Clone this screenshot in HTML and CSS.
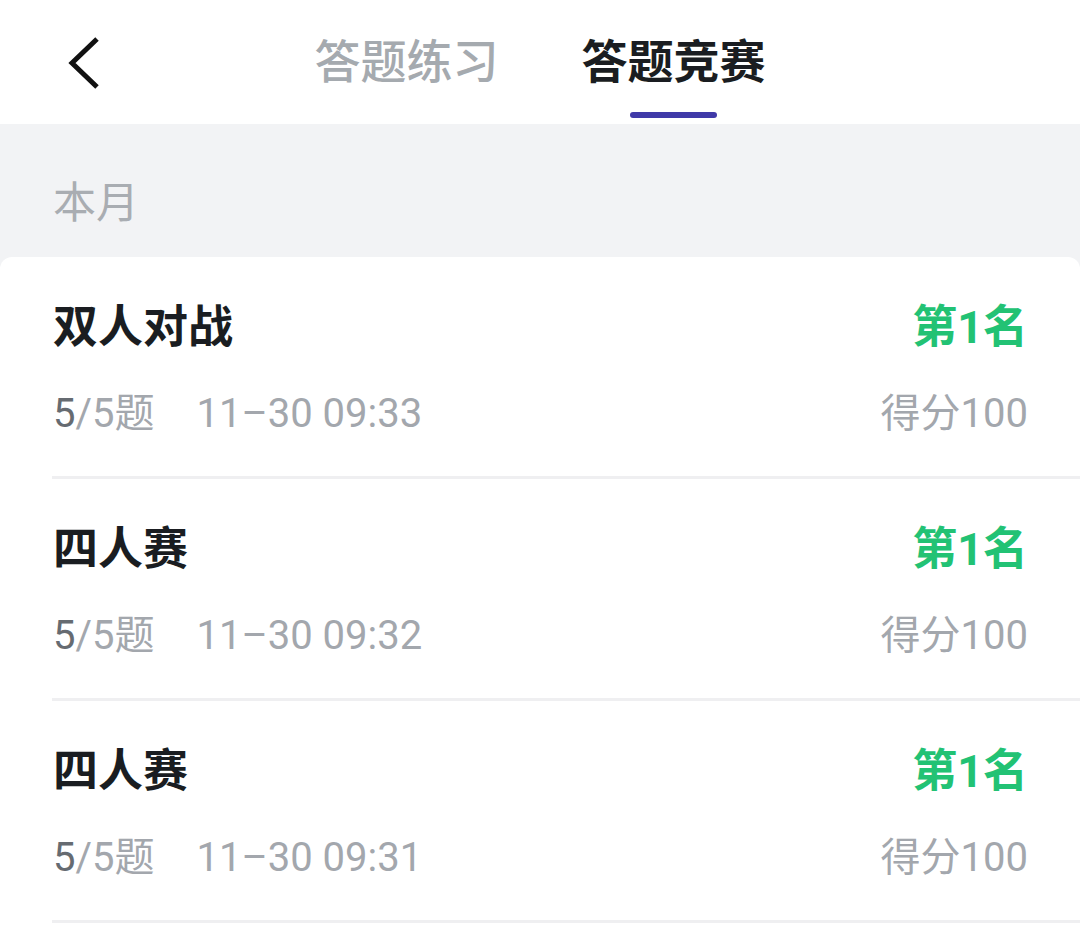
FILE: index.html
```html
<!DOCTYPE html>
<html lang="zh-CN">
<head>
<meta charset="utf-8">
<title>答题竞赛</title>
<link rel="stylesheet" href="styles.css">
</head>
<body>
<header class="header">
  <div class="back">
    <svg width="40" height="60" viewBox="0 0 40 60"><path d="M33 6 L8 30 L33 54" fill="none" stroke="#111" stroke-width="5" stroke-linecap="butt" stroke-linejoin="miter"/></svg>
  </div>
  <nav class="tabs">
    <div class="tab">答题练习</div>
    <div class="tab active">答题竞赛<span class="bar"></span></div>
  </nav>
  <div></div>
</header>
<div class="section">本月</div>
<main class="card">
  <div class="row">
    <div class="line1"><span class="title">双人对战</span><span class="rank">第1名</span></div>
    <div class="line2"><span class="meta"><span class="done">5</span>/5题<span class="time">11–30 09:33</span></span><span class="score">得分100</span></div>
  </div>
  <div class="row">
    <div class="line1"><span class="title">四人赛</span><span class="rank">第1名</span></div>
    <div class="line2"><span class="meta"><span class="done">5</span>/5题<span class="time">11–30 09:32</span></span><span class="score">得分100</span></div>
  </div>
  <div class="row">
    <div class="line1"><span class="title">四人赛</span><span class="rank">第1名</span></div>
    <div class="line2"><span class="meta"><span class="done">5</span>/5题<span class="time">11–30 09:31</span></span><span class="score">得分100</span></div>
  </div>
</main>
</body>
</html>
```

FILE: styles.css
```css
* { box-sizing: border-box; }
html, body { margin: 0; padding: 0; }
body {
  background: #f2f3f5;
  font-family: Roboto, "Noto Sans CJK SC", sans-serif;
  width: 1080px;
  height: 936px;
  overflow: hidden;
}
.header {
  height: 124px;
  background: #fff;
  display: grid;
  grid-template-columns: 1fr auto 1fr;
  align-items: center;
}
.back {
  padding-left: 64px;
  padding-top: 2px;
  display: flex;
  align-items: center;
}
.back svg { display: block; }
.tabs {
  display: flex;
  gap: 83px;
  height: 124px;
  align-items: center;
}
.tab {
  position: relative;
  font-size: 46px;
  line-height: 1;
  color: #a5aaaf;
  font-weight: 500;
}
.tab.active {
  color: #1a1d21;
  font-weight: 700;
}
.bar {
  position: absolute;
  left: 48px;
  width: 87px;
  height: 6px;
  border-radius: 3px;
  background: #403aa8;
  top: 73px;
}
.section {
  height: 133px;
  padding-left: 53px;
  padding-top: 49px;
  font-size: 43px;
  line-height: 52px;
  color: #a9adb2;
  font-family: "Noto Sans CJK SC", sans-serif;
}
.card {
  background: #fff;
  border-radius: 12px 12px 0 0;
  min-height: 679px;
}
.row {
  padding: 41px 52px 47px 53px;
  position: relative;
}
.row::after {
  content: "";
  position: absolute;
  left: 52px;
  right: 0;
  bottom: 0;
  height: 3px;
  background: #efeff1;
}
.line1, .line2 {
  display: flex;
  justify-content: space-between;
  align-items: center;
}
.line1 { height: 50px; }
.line2 { height: 44px; margin-top: 40px; }
.title {
  font-size: 45px;
  font-weight: 700;
  color: #1a1d21;
  font-family: "Noto Sans CJK SC", sans-serif;
}
.rank {
  font-size: 45px;
  font-weight: 700;
  color: #22c274;
}
.meta, .score {
  font-size: 40px;
  color: #a3a7ad;
}
.done { color: #666b71; }
.time { margin-left: 42px; }
```
